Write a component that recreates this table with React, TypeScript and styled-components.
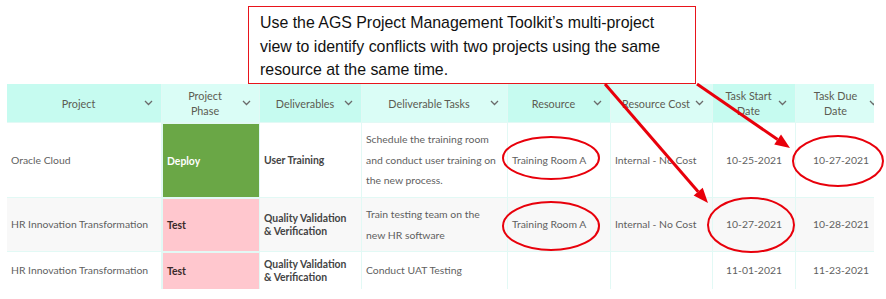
import React from 'react';
import styled, {createGlobalStyle} from 'styled-components';

const GlobalStyle = createGlobalStyle`
  html, body {
    margin: 0;
    padding: 0;
    background: #ffffff;
  }
`;

const Stage = styled.div`
  position: relative;
  width: 886px;
  height: 299px;
  overflow: hidden;
  background: #ffffff;
  padding-top: 6px;
  box-sizing: border-box;
`;

const Callout = styled.div`
  margin-left: 248px;
  width: 448px;
  height: 78px;
  box-sizing: border-box;
  border: 1px solid #e8141b;
  background: #ffffff;
  padding: 4px 0 0 11px;
  font-family: 'Liberation Sans', Arial, sans-serif;
  font-size: 15.9px;
  line-height: 23.5px;
  color: #111111;
  white-space: nowrap;
`;

const TableClip = styled.div`
  margin-left: 7px;
  width: 867px;
  overflow: hidden;
`;

const Grid = styled.div`
  display: grid;
  width: 878px;
  grid-template-columns: 154px 97px 101px 145px 102px 101px 82px 90px;
  grid-template-rows: 38px 74px 53px 37px;
  gap: 1px;
  background: #e2f9f5;
  font-family: Lato, 'Open Sans', sans-serif;
  font-size: 10.4px;
  color: #5f5f5f;
`;

const HeadCell = styled.div<{$dark: boolean}>`
  display: flex;
  align-items: center;
  background: ${p => (p.$dark ? '#c6fbf0' : '#dafdf6')};
  padding: 0 8px 0 6px;
  color: #5c5c52;
  font-size: 10.8px;
  line-height: 15px;
`;

const HeadLabel = styled.span`
  flex: 1;
  text-align: center;
`;

const Chevron = () => (
  <svg width="9" height="6" viewBox="0 0 9 6">
    <polyline points="1,1 4.5,4.5 8,1" fill="none" stroke="#6b6b6b" strokeWidth="1.3" />
  </svg>
);

const Cell = styled.div<{$alt?: boolean; $center?: boolean; $bold?: boolean}>`
  display: flex;
  align-items: center;
  justify-content: ${p => (p.$center ? 'center' : 'flex-start')};
  background: ${p => (p.$alt ? '#f8f8f8' : '#ffffff')};
  padding: 0 4px 0 4px;
  white-space: nowrap;
  font-weight: ${p => (p.$bold ? 700 : 400)};
  color: ${p => (p.$bold ? '#444444' : '#5f5f5f')};
  line-height: ${p => (p.$bold ? '13px' : '20.5px')};
`;

const PhaseCell = styled.div<{$phase: 'Deploy' | 'Test'}>`
  display: flex;
  align-items: center;
  padding: 0 4px;
  margin: 1px 0 0 1px;
  background: ${p => (p.$phase === 'Deploy' ? '#6aa746' : '#ffc7ce')};
  color: ${p => (p.$phase === 'Deploy' ? '#ffffff' : '#3a2a2a')};
  font-weight: 700;
`;

const Overlay = styled.svg`
  position: absolute;
  left: 0;
  top: 0;
  pointer-events: none;
`;

type Row = {
  project: string;
  phase: 'Deploy' | 'Test';
  deliverable: string[];
  task: string[];
  resource: string;
  cost: string;
  start: string;
  due: string;
};

const headers: string[][] = [
  ['Project'],
  ['Project', 'Phase'],
  ['Deliverables'],
  ['Deliverable Tasks'],
  ['Resource'],
  ['Resource Cost'],
  ['Task Start', 'Date'],
  ['Task Due', 'Date'],
];

const rows: Row[] = [
  {
    project: 'Oracle Cloud',
    phase: 'Deploy',
    deliverable: ['User Training'],
    task: ['Schedule the training room', 'and conduct user training on', 'the new process.'],
    resource: 'Training Room A',
    cost: 'Internal - No Cost',
    start: '10-25-2021',
    due: '10-27-2021',
  },
  {
    project: 'HR Innovation Transformation',
    phase: 'Test',
    deliverable: ['Quality Validation', '& Verification'],
    task: ['Train testing team on the', 'new HR software'],
    resource: 'Training Room A',
    cost: 'Internal - No Cost',
    start: '10-27-2021',
    due: '10-28-2021',
  },
  {
    project: 'HR Innovation Transformation',
    phase: 'Test',
    deliverable: ['Quality Validation', '& Verification'],
    task: ['Conduct UAT Testing'],
    resource: '',
    cost: '',
    start: '11-01-2021',
    due: '11-23-2021',
  },
];

const Lines = ({lines}: {lines: string[]}) => (
  <div>
    {lines.map((l, i) => (
      <div key={i}>{l}</div>
    ))}
  </div>
);

const Arrow = ({x1, y1, x2, y2}: {x1: number; y1: number; x2: number; y2: number}) => {
  const a = Math.atan2(y2 - y1, x2 - x1);
  const len = 15;
  const w = 6;
  const bx = x2 - len * Math.cos(a);
  const by = y2 - len * Math.sin(a);
  const px = -Math.sin(a) * w;
  const py = Math.cos(a) * w;
  return (
    <g>
      <line x1={x1} y1={y1} x2={bx} y2={by} stroke="#e8000b" strokeWidth="3" />
      <polygon points={`${x2},${y2} ${bx + px},${by + py} ${bx - px},${by - py}`} fill="#e8000b" />
    </g>
  );
};

export default function App() {
  return (
    <>
      <GlobalStyle />
      <Stage>
        <Callout>
          Use the AGS Project Management Toolkit’s multi-project
          <br />
          view to identify conflicts with two projects using the same
          <br />
          resource at the same time.
        </Callout>
        <TableClip>
          <Grid>
            {headers.map((h, i) => (
              <HeadCell key={i} $dark={i % 2 === 0}>
                <HeadLabel>
                  {h.map((l, j) => (
                    <div key={j}>{l}</div>
                  ))}
                </HeadLabel>
                <Chevron />
              </HeadCell>
            ))}
            {rows.map((r, i) => {
              const alt = i === 1;
              return (
                <React.Fragment key={i}>
                  <Cell $alt={alt}>{r.project}</Cell>
                  <PhaseCell $phase={r.phase}>{r.phase}</PhaseCell>
                  <Cell $alt={alt} $bold>
                    <Lines lines={r.deliverable} />
                  </Cell>
                  <Cell $alt={alt}>
                    <Lines lines={r.task} />
                  </Cell>
                  <Cell $alt={alt}>{r.resource}</Cell>
                  <Cell $alt={alt}>{r.cost}</Cell>
                  <Cell $alt={alt} $center>{r.start}</Cell>
                  <Cell $alt={alt} $center>{r.due}</Cell>
                </React.Fragment>
              );
            })}
          </Grid>
        </TableClip>
        <Overlay width="886" height="299" viewBox="0 0 886 299">
          <g fill="none" stroke="#e8000b" strokeWidth="2">
            <ellipse cx="551" cy="158" rx="48" ry="21" />
            <ellipse cx="551" cy="226" rx="48" ry="24" />
            <ellipse cx="751" cy="225" rx="43" ry="27" />
            <ellipse cx="838" cy="161" rx="45" ry="25" />
          </g>
          <Arrow x1={605} y1={84} x2={708} y2={203} />
          <Arrow x1={697} y1={84} x2={790} y2={148} />
        </Overlay>
      </Stage>
    </>
  );
}
